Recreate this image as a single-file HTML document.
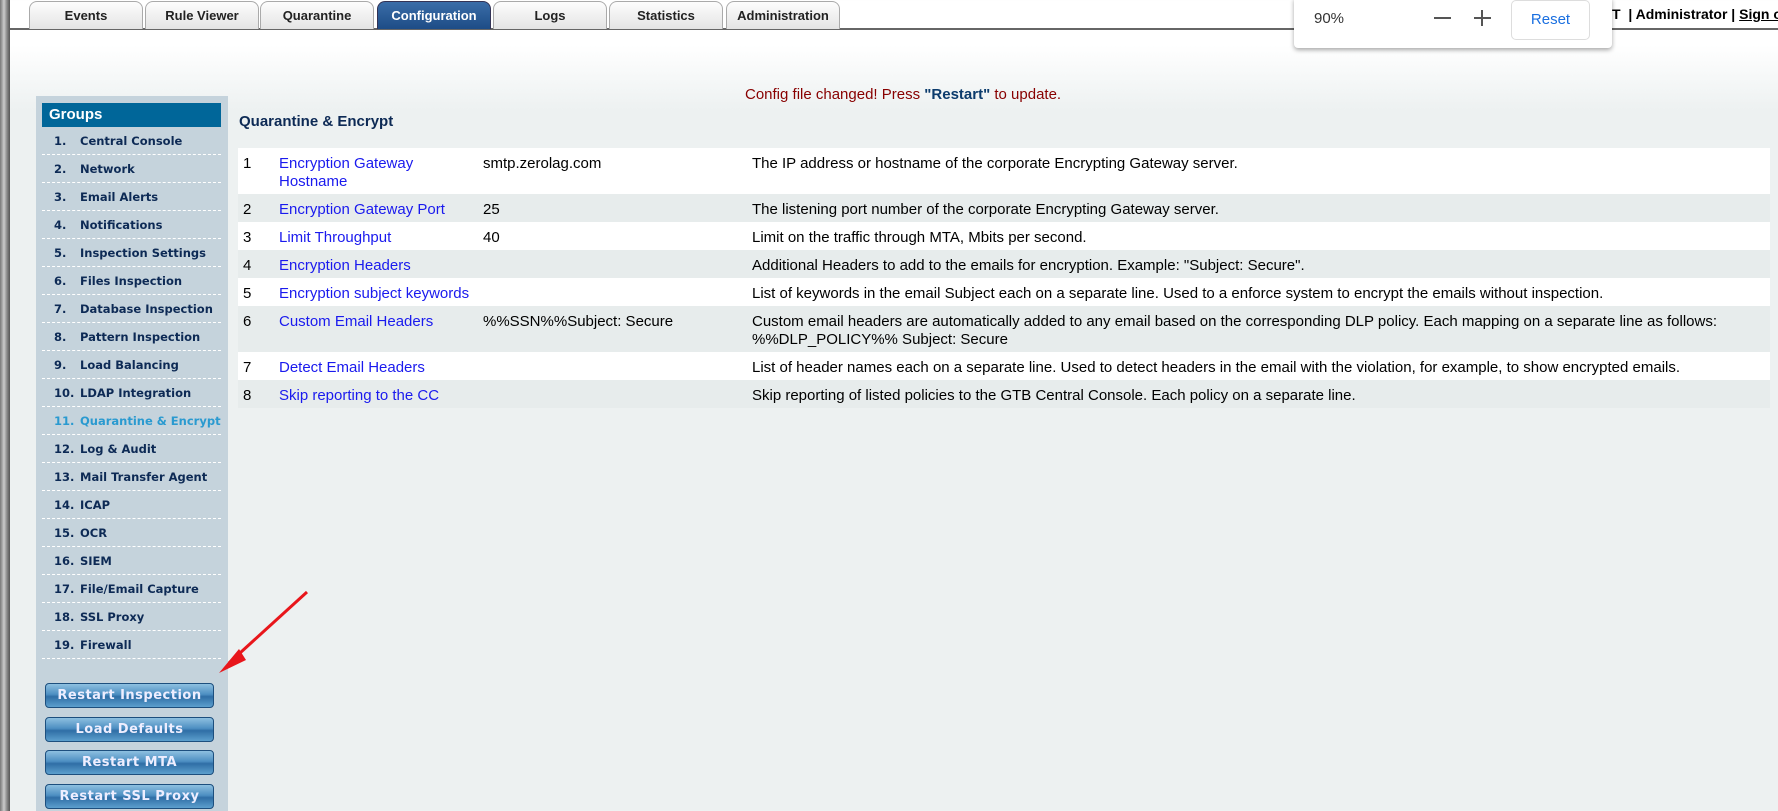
<!DOCTYPE html>
<html><head><meta charset="utf-8"><style>
*{margin:0;padding:0;box-sizing:border-box}
body{width:1778px;height:811px;overflow:hidden;position:relative;font-family:"Liberation Sans",Tahoma,sans-serif;background:linear-gradient(#fff 0,#fff 45px,#edf1f1 110px,#edf1f1 100%)}
.lb{position:absolute;left:0;top:0;width:10px;height:811px;background:linear-gradient(90deg,#777,#ccc 40%,#888 70%,#555)}
.tabline{position:absolute;left:10px;right:0;top:28px;height:2px;background:#666}
.tab{position:absolute;top:1px;height:28px;width:114px;border:1px solid #aaa;border-bottom:none;border-radius:8px 8px 0 0;background:linear-gradient(#fdfdfd,#e4e4e4);font:bold 13px "Liberation Sans",sans-serif;color:#222;text-align:center;line-height:27px}
.tab.on{background:linear-gradient(#3a6da8,#1d4c86);color:#fff;border-color:#335}
.zoom{position:absolute;left:1294px;top:-2px;width:318px;height:50px;background:#fff;border-radius:0 0 4px 4px;box-shadow:0 2px 5px rgba(0,0,0,.35);font-size:15px;color:#333}
.admin{position:absolute;left:1612px;top:6px;font:bold 14px "Liberation Sans",sans-serif;color:#000;white-space:nowrap}
.msg{position:absolute;left:745px;top:86px;font-size:15px;color:#800;white-space:nowrap}
.msg b{color:#0b3b6c}
.side{position:absolute;left:36px;top:96px;width:192px;height:715px;background:#c5d3dc}
.gh{position:absolute;left:6px;top:7px;width:179px;height:24px;background:#006699;color:#fff;font:bold 15px "Liberation Sans",sans-serif;padding:3px 0 0 7px}
.it{position:absolute;left:6px;width:179px;height:28px;border-bottom:1px dashed #fff;font:bold 11.5px "DejaVu Sans",sans-serif;color:#0d2a55;line-height:28px;white-space:nowrap}
.it span{position:absolute;left:12px}
.it i{font-style:normal;position:absolute;left:38px}
.it.act{color:#2a9ad0}
.btn{position:absolute;left:9px;width:169px;height:25px;border-radius:4px;background:linear-gradient(#8ec0e0,#4d8fc2 45%,#2f6ea6 55%,#5c9fcd);border:1px solid #1d4f7e;color:#eef;font:bold 13px "DejaVu Sans",sans-serif;text-align:center;line-height:23px;letter-spacing:.5px}
h2{position:absolute;left:239px;top:113px;font:bold 15px "Liberation Sans",sans-serif;color:#0d2a55}
table{position:absolute;left:238px;top:148px;width:1532px;border-collapse:collapse;font-size:15px;color:#000}
td{vertical-align:top;padding:7px 0 0 0;line-height:18px}
tr{height:28px}
tr.w{background:#fff}tr.g{background:#e7ecec}
td.n{width:41px;padding-left:5px}
td.k{width:204px;color:#1a1aee}
td.v{width:269px}
</style></head><body>
<div class="lb"></div>
<div class="tabline"></div>
<div class="tab" style="left:29px">Events</div>
<div class="tab" style="left:145px">Rule Viewer</div>
<div class="tab" style="left:260px">Quarantine</div>
<div class="tab on" style="left:377px">Configuration</div>
<div class="tab" style="left:493px">Logs</div>
<div class="tab" style="left:609px">Statistics</div>
<div class="tab" style="left:726px">Administration</div>
<div class="admin">T &nbsp;| Administrator | <u>Sign o</u></div>
<div class="zoom">
<span style="position:absolute;left:20px;top:12px">90%</span>
<span style="position:absolute;left:140px;top:19px;width:17px;height:2px;background:#555"></span>
<span style="position:absolute;left:180px;top:19px;width:17px;height:2px;background:#555"></span>
<span style="position:absolute;left:187px;top:12px;width:2px;height:16px;background:#555"></span>
<span style="position:absolute;left:217px;top:2px;width:79px;height:40px;border:1px solid #ddd;border-radius:5px;color:#1a6fe0;text-align:center;line-height:38px">Reset</span>
</div>
<div class="msg">Config file changed! Press <b>"Restart"</b> to update.</div>
<div class="side">
<div class="gh">Groups</div>
<div class="it" style="top:31px"><span>1.</span><i>Central Console</i></div>
<div class="it" style="top:59px"><span>2.</span><i>Network</i></div>
<div class="it" style="top:87px"><span>3.</span><i>Email Alerts</i></div>
<div class="it" style="top:115px"><span>4.</span><i>Notifications</i></div>
<div class="it" style="top:143px"><span>5.</span><i>Inspection Settings</i></div>
<div class="it" style="top:171px"><span>6.</span><i>Files Inspection</i></div>
<div class="it" style="top:199px"><span>7.</span><i>Database Inspection</i></div>
<div class="it" style="top:227px"><span>8.</span><i>Pattern Inspection</i></div>
<div class="it" style="top:255px"><span>9.</span><i>Load Balancing</i></div>
<div class="it" style="top:283px"><span>10.</span><i>LDAP Integration</i></div>
<div class="it act" style="top:311px"><span>11.</span><i>Quarantine &amp; Encrypt</i></div>
<div class="it" style="top:339px"><span>12.</span><i>Log &amp; Audit</i></div>
<div class="it" style="top:367px"><span>13.</span><i>Mail Transfer Agent</i></div>
<div class="it" style="top:395px"><span>14.</span><i>ICAP</i></div>
<div class="it" style="top:423px"><span>15.</span><i>OCR</i></div>
<div class="it" style="top:451px"><span>16.</span><i>SIEM</i></div>
<div class="it" style="top:479px"><span>17.</span><i>File/Email Capture</i></div>
<div class="it" style="top:507px"><span>18.</span><i>SSL Proxy</i></div>
<div class="it" style="top:535px"><span>19.</span><i>Firewall</i></div>
<div class="btn" style="top:587px">Restart Inspection</div>
<div class="btn" style="top:621px">Load Defaults</div>
<div class="btn" style="top:654px">Restart MTA</div>
<div class="btn" style="top:688px">Restart SSL Proxy</div>
</div>
<svg style="position:absolute;left:215px;top:588px" width="100" height="88"><line x1="92" y1="4" x2="14" y2="75" stroke="#e8161b" stroke-width="3"/><polygon points="4,85 24,61 31,72" fill="#e8161b"/></svg>
<h2>Quarantine &amp; Encrypt</h2>
<table>
<tr class="w" style="height:46px"><td class="n">1</td><td class="k">Encryption Gateway<br>Hostname</td><td class="v">smtp.zerolag.com</td><td>The IP address or hostname of the corporate Encrypting Gateway server.</td></tr>
<tr class="g"><td class="n">2</td><td class="k">Encryption Gateway Port</td><td class="v">25</td><td>The listening port number of the corporate Encrypting Gateway server.</td></tr>
<tr class="w"><td class="n">3</td><td class="k">Limit Throughput</td><td class="v">40</td><td>Limit on the traffic through MTA, Mbits per second.</td></tr>
<tr class="g"><td class="n">4</td><td class="k">Encryption Headers</td><td class="v"></td><td>Additional Headers to add to the emails for encryption. Example: "Subject: Secure".</td></tr>
<tr class="w"><td class="n">5</td><td class="k" style="white-space:nowrap">Encryption subject keywords</td><td class="v"></td><td>List of keywords in the email Subject each on a separate line. Used to a enforce system to encrypt the emails without inspection.</td></tr>
<tr class="g" style="height:46px"><td class="n">6</td><td class="k">Custom Email Headers</td><td class="v">%%SSN%%Subject: Secure</td><td>Custom email headers are automatically added to any email based on the corresponding DLP policy. Each mapping on a separate line as follows:<br>%%DLP_POLICY%% Subject: Secure</td></tr>
<tr class="w"><td class="n">7</td><td class="k">Detect Email Headers</td><td class="v"></td><td>List of header names each on a separate line. Used to detect headers in the email with the violation, for example, to show encrypted emails.</td></tr>
<tr class="g"><td class="n">8</td><td class="k">Skip reporting to the CC</td><td class="v"></td><td>Skip reporting of listed policies to the GTB Central Console. Each policy on a separate line.</td></tr>
</table>
</body></html>
